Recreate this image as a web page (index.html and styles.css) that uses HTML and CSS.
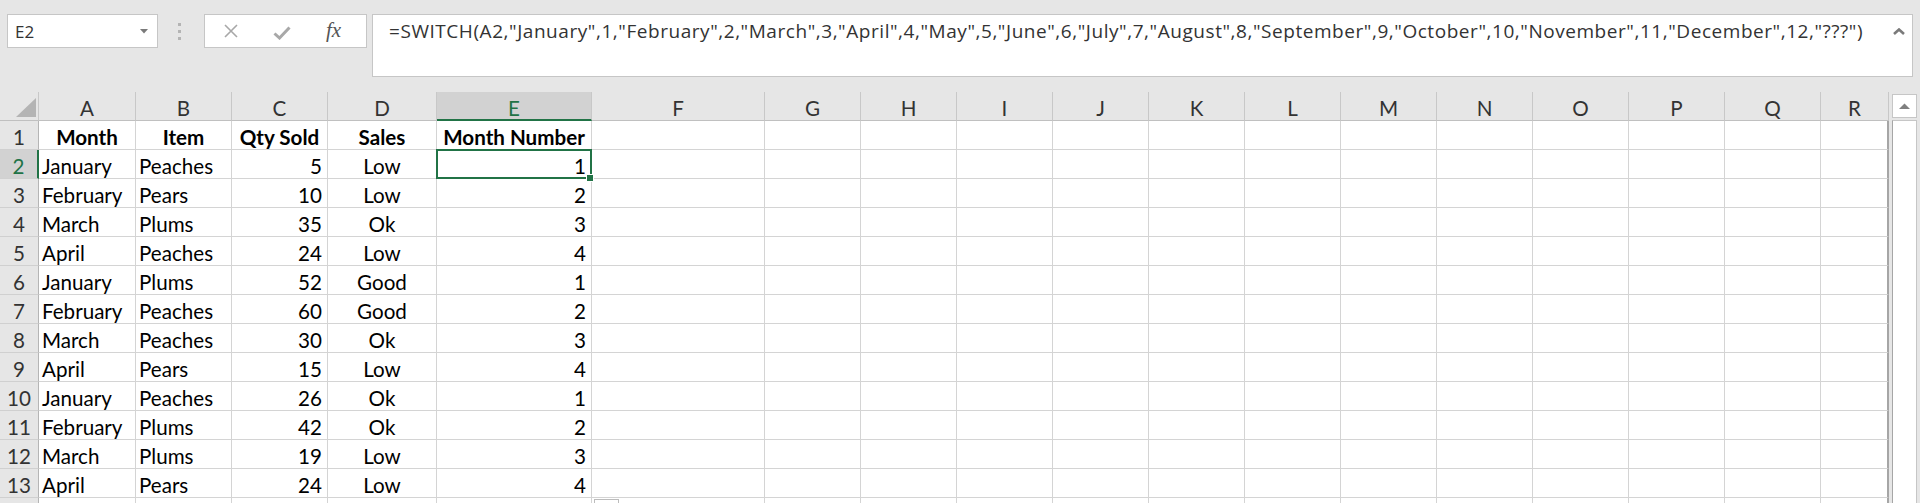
FILE: index.html
```html
<!DOCTYPE html>
<html>
<head>
<meta charset="utf-8">
<link rel="stylesheet" href="styles.css">
</head>
<body>
<div class="fbar">
  <div class="namebox"><span>E2</span><svg width="8" height="5" viewBox="0 0 8 5"><path d="M0 0h8L4 4.5z" fill="#7a7a7a"/></svg></div>
  <div class="grip"><i></i><i></i><i></i></div>
  <div class="fbtns">
    <svg class="ix" width="14" height="14" viewBox="0 0 14 14"><path d="M1 1L13 13M13 1L1 13" stroke="#a8a8a8" stroke-width="1.6" fill="none"/></svg>
    <svg class="ic" width="18" height="14" viewBox="0 0 18 14"><path d="M1.5 7.5L6.5 12L16.5 1.5" stroke="#a8a8a8" stroke-width="3" fill="none"/></svg>
    <span class="fx">fx</span>
  </div>
  <div class="finput">
    <span class="ftext">=SWITCH(A2,"January",1,"February",2,"March",3,"April",4,"May",5,"June",6,"July",7,"August",8,"September",9,"October",10,"November",11,"December",12,"???")</span>
    <svg class="chev" width="12" height="7" viewBox="0 0 12 7"><path d="M1 6L6 1.5L11 6" stroke="#7a7a7a" stroke-width="2.6" fill="none"/></svg>
  </div>
</div>
<div class="sheet">
  <div class="grid">
    <div class="c h corner"><svg width="39" height="28" viewBox="0 0 39 28"><path d="M36 6V25H16z" fill="#b4b4b4"/></svg></div>
    <div class="c h">A</div><div class="c h">B</div><div class="c h">C</div><div class="c h">D</div><div class="c h hs">E</div><div class="c h">F</div><div class="c h">G</div><div class="c h">H</div><div class="c h">I</div><div class="c h">J</div><div class="c h">K</div><div class="c h">L</div><div class="c h">M</div><div class="c h">N</div><div class="c h">O</div><div class="c h">P</div><div class="c h">Q</div><div class="c h">R</div>

    <div class="c rh">1</div><div class="c b m">Month</div><div class="c b m">Item</div><div class="c b m">Qty Sold</div><div class="c b m">Sales</div><div class="c b m">Month Number</div>
    <div class="c"></div><div class="c"></div><div class="c"></div><div class="c"></div><div class="c"></div><div class="c"></div><div class="c"></div><div class="c"></div><div class="c"></div><div class="c"></div><div class="c"></div><div class="c"></div><div class="c"></div>

    <div class="c rh rs">2</div><div class="c">January</div><div class="c">Peaches</div><div class="c r">5</div><div class="c m">Low</div><div class="c r sel">1</div>
    <div class="c"></div><div class="c"></div><div class="c"></div><div class="c"></div><div class="c"></div><div class="c"></div><div class="c"></div><div class="c"></div><div class="c"></div><div class="c"></div><div class="c"></div><div class="c"></div><div class="c"></div>

    <div class="c rh">3</div><div class="c">February</div><div class="c">Pears</div><div class="c r">10</div><div class="c m">Low</div><div class="c r">2</div>
    <div class="c"></div><div class="c"></div><div class="c"></div><div class="c"></div><div class="c"></div><div class="c"></div><div class="c"></div><div class="c"></div><div class="c"></div><div class="c"></div><div class="c"></div><div class="c"></div><div class="c"></div>

    <div class="c rh">4</div><div class="c">March</div><div class="c">Plums</div><div class="c r">35</div><div class="c m">Ok</div><div class="c r">3</div>
    <div class="c"></div><div class="c"></div><div class="c"></div><div class="c"></div><div class="c"></div><div class="c"></div><div class="c"></div><div class="c"></div><div class="c"></div><div class="c"></div><div class="c"></div><div class="c"></div><div class="c"></div>

    <div class="c rh">5</div><div class="c">April</div><div class="c">Peaches</div><div class="c r">24</div><div class="c m">Low</div><div class="c r">4</div>
    <div class="c"></div><div class="c"></div><div class="c"></div><div class="c"></div><div class="c"></div><div class="c"></div><div class="c"></div><div class="c"></div><div class="c"></div><div class="c"></div><div class="c"></div><div class="c"></div><div class="c"></div>

    <div class="c rh">6</div><div class="c">January</div><div class="c">Plums</div><div class="c r">52</div><div class="c m">Good</div><div class="c r">1</div>
    <div class="c"></div><div class="c"></div><div class="c"></div><div class="c"></div><div class="c"></div><div class="c"></div><div class="c"></div><div class="c"></div><div class="c"></div><div class="c"></div><div class="c"></div><div class="c"></div><div class="c"></div>

    <div class="c rh">7</div><div class="c">February</div><div class="c">Peaches</div><div class="c r">60</div><div class="c m">Good</div><div class="c r">2</div>
    <div class="c"></div><div class="c"></div><div class="c"></div><div class="c"></div><div class="c"></div><div class="c"></div><div class="c"></div><div class="c"></div><div class="c"></div><div class="c"></div><div class="c"></div><div class="c"></div><div class="c"></div>

    <div class="c rh">8</div><div class="c">March</div><div class="c">Peaches</div><div class="c r">30</div><div class="c m">Ok</div><div class="c r">3</div>
    <div class="c"></div><div class="c"></div><div class="c"></div><div class="c"></div><div class="c"></div><div class="c"></div><div class="c"></div><div class="c"></div><div class="c"></div><div class="c"></div><div class="c"></div><div class="c"></div><div class="c"></div>

    <div class="c rh">9</div><div class="c">April</div><div class="c">Pears</div><div class="c r">15</div><div class="c m">Low</div><div class="c r">4</div>
    <div class="c"></div><div class="c"></div><div class="c"></div><div class="c"></div><div class="c"></div><div class="c"></div><div class="c"></div><div class="c"></div><div class="c"></div><div class="c"></div><div class="c"></div><div class="c"></div><div class="c"></div>

    <div class="c rh">10</div><div class="c">January</div><div class="c">Peaches</div><div class="c r">26</div><div class="c m">Ok</div><div class="c r">1</div>
    <div class="c"></div><div class="c"></div><div class="c"></div><div class="c"></div><div class="c"></div><div class="c"></div><div class="c"></div><div class="c"></div><div class="c"></div><div class="c"></div><div class="c"></div><div class="c"></div><div class="c"></div>

    <div class="c rh">11</div><div class="c">February</div><div class="c">Plums</div><div class="c r">42</div><div class="c m">Ok</div><div class="c r">2</div>
    <div class="c"></div><div class="c"></div><div class="c"></div><div class="c"></div><div class="c"></div><div class="c"></div><div class="c"></div><div class="c"></div><div class="c"></div><div class="c"></div><div class="c"></div><div class="c"></div><div class="c"></div>

    <div class="c rh">12</div><div class="c">March</div><div class="c">Plums</div><div class="c r">19</div><div class="c m">Low</div><div class="c r">3</div>
    <div class="c"></div><div class="c"></div><div class="c"></div><div class="c"></div><div class="c"></div><div class="c"></div><div class="c"></div><div class="c"></div><div class="c"></div><div class="c"></div><div class="c"></div><div class="c"></div><div class="c"></div>

    <div class="c rh">13</div><div class="c">April</div><div class="c">Pears</div><div class="c r">24</div><div class="c m">Low</div><div class="c r">4</div>
    <div class="c"></div><div class="c"></div><div class="c"></div><div class="c"></div><div class="c"></div><div class="c"></div><div class="c"></div><div class="c"></div><div class="c"></div><div class="c"></div><div class="c"></div><div class="c"></div><div class="c"></div>

    <div class="c rh"></div><div class="c"></div><div class="c"></div><div class="c"></div><div class="c"></div><div class="c"></div>
    <div class="c"></div><div class="c"></div><div class="c"></div><div class="c"></div><div class="c"></div><div class="c"></div><div class="c"></div><div class="c"></div><div class="c"></div><div class="c"></div><div class="c"></div><div class="c"></div><div class="c"></div>
  </div>
  <div class="vscroll">
    <div class="vbtn"><svg width="11" height="6" viewBox="0 0 11 6"><path d="M0 6L5.5 0.5L11 6z" fill="#808080"/></svg></div>
    <div class="vthumb"></div>
  </div>
  <div class="qa"></div>
</div>
</body>
</html>
```

FILE: styles.css
```css
html, body {
  margin: 0;
  height: 503px;
  overflow: hidden;
  background: #e6e6e6;
}

.fbar {
  display: flex;
  align-items: flex-start;
  height: 92px;
  box-sizing: border-box;
  padding: 14px 7px 0 7px;
}

.namebox {
  width: 151px;
  height: 34px;
  box-sizing: border-box;
  background: #fff;
  border: 1px solid #c6c6c6;
  display: flex;
  align-items: center;
  justify-content: space-between;
  padding: 0 9px 0 7px;
  font: 17px "Open Sans", sans-serif;
  color: #333;
}

.grip {
  margin: 9px 23px 0 20px;
  display: flex;
  flex-direction: column;
  gap: 4px;
}

.grip i {
  display: block;
  width: 3px;
  height: 3px;
  background: #b4b4b4;
}

.fbtns {
  width: 163px;
  height: 34px;
  box-sizing: border-box;
  background: #fff;
  border: 1px solid #c6c6c6;
  display: flex;
  align-items: center;
  gap: 35px;
  padding-left: 19px;
}

.fbtns .ic {
  margin-top: 3px;
}

.fx {
  font: italic 21px "Liberation Serif", serif;
  color: #555;
  width: 18px;
  line-height: 20px;
  margin-top: -2px;
}

.finput {
  margin-left: 5px;
  flex: 1;
  height: 63px;
  box-sizing: border-box;
  background: #fff;
  border: 1px solid #c6c6c6;
  display: flex;
  align-items: flex-start;
  justify-content: space-between;
  padding: 4px 7px 0 16px;
}

.ftext {
  font: 19px "Open Sans", sans-serif;
  letter-spacing: 0.55px;
  line-height: 24px;
  color: #333;
  white-space: nowrap;
}

.chev {
  margin-top: 9px;
}

.sheet {
  display: flex;
  position: relative;
}

.grid {
  display: grid;
  grid-template-columns: 39px 97px 96px 96px 109px 155px 173px repeat(11, 96px) 68px;
  grid-auto-rows: 29px;
  background: #fff;
  font: 20.6px Lato, "Open Sans", sans-serif;
  color: #000;
}

.c {
  box-sizing: border-box;
  border-right: 1px solid #d4d4d4;
  border-bottom: 1px solid #d4d4d4;
  line-height: 27px;
  padding: 3px 3px 0;
  white-space: nowrap;
}

.h {
  background: #e6e6e6;
  text-align: center;
  color: #333;
  border-right-color: #c8c8c8;
  border-bottom-color: #c0c0c0;
  line-height: 27px;
  padding-top: 3px;
}

.corner {
  padding: 0;
  line-height: 0;
}

.hs {
  background: #d2d2d2;
  color: #217346;
  border-bottom: 2px solid #217346;
}

.rh {
  background: #e6e6e6;
  text-align: center;
  color: #333;
  padding: 3px 0 0;
  border-right-color: #b5b5b5;
  border-bottom-color: #d0d0d0;
}

.rs {
  background: #d2d2d2;
  color: #217346;
  border-right: 2px solid #217346;
}

.b {
  font-weight: bold;
}

.m {
  text-align: center;
}

.r {
  text-align: right;
  padding-right: 5px;
}

.grid > .c:nth-child(19n+38) {
  border-right: 2px solid #a6a6a6;
}

.sel {
  position: relative;
  z-index: 1;
}

.sel::after {
  content: "";
  position: absolute;
  left: -1px;
  top: -1px;
  right: -1px;
  bottom: -1px;
  border: 2px solid #217346;
}

.sel::before {
  content: "";
  position: absolute;
  right: -3px;
  bottom: -4px;
  width: 6px;
  height: 6px;
  background: #217346;
  border: 1px solid #fff;
  z-index: 2;
}

.vscroll {
  width: 31px;
  box-sizing: border-box;
  padding: 2px 3px 0 3px;
  display: flex;
  flex-direction: column;
  gap: 2px;
}

.vbtn {
  height: 24px;
  box-sizing: border-box;
  background: #fff;
  border: 1px solid #c6c6c6;
  display: flex;
  align-items: center;
  justify-content: center;
}

.vthumb {
  flex: 1;
  background: #fff;
  border: 1px solid #c6c6c6;
  border-left-color: #a6a6a6;
}

.qa {
  position: absolute;
  left: 594px;
  top: 407px;
  width: 25px;
  height: 12px;
  box-sizing: border-box;
  background: #fff;
  border: 1px solid #bcbcbc;
}
```
